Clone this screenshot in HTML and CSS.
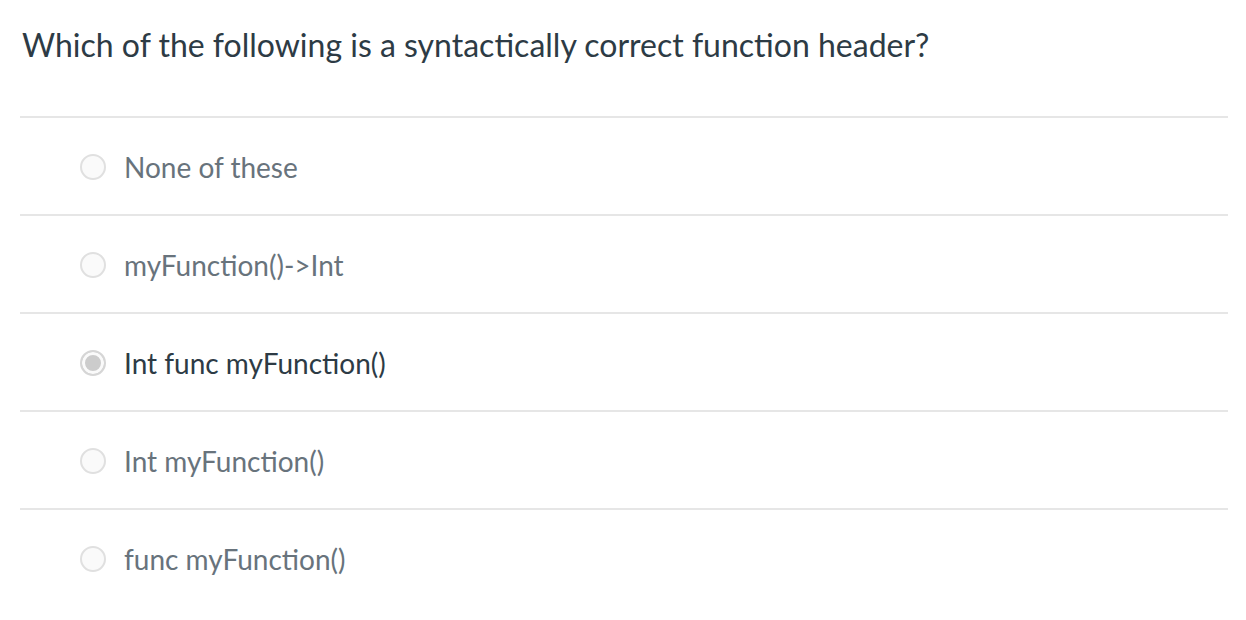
FILE: index.html
```html
<!DOCTYPE html>
<html>
<head>
<meta charset="utf-8">
<link rel="stylesheet" href="styles.css">
</head>
<body>
<div class="quiz">
  <div class="question">Which of the following is a syntactically correct function header?</div>
  <div class="answers">
    <div class="answer"><span class="radio"></span><span class="label">None of these</span></div>
    <div class="answer"><span class="radio"></span><span class="label">myFunction()-&gt;Int</span></div>
    <div class="answer selected"><span class="radio"></span><span class="label">Int func myFunction()</span></div>
    <div class="answer"><span class="radio"></span><span class="label">Int myFunction()</span></div>
    <div class="answer"><span class="radio"></span><span class="label">func myFunction()</span></div>
  </div>
</div>
</body>
</html>
```
FILE: styles.css
```css
html, body {
  margin: 0;
  padding: 0;
  background: #ffffff;
}
body {
  font-family: Lato, "Open Sans", sans-serif;
}
.quiz {
  width: 1208px;
  margin-left: 20px;
}
.question {
  height: 116px;
  box-sizing: border-box;
  padding: 22px 0 0 2px;
  font-size: 32px;
  line-height: 46px;
  color: #2d3b45;
}
.answer {
  display: flex;
  align-items: center;
  height: 98px;
  box-sizing: border-box;
  border-top: 2px solid #e6e6e6;
  padding-top: 2px;
  padding-left: 60px;
}
.radio {
  width: 26px;
  height: 26px;
  box-sizing: border-box;
  border-radius: 50%;
  border: 2px solid #e0e0e0;
  background: #fafafa;
  flex: none;
  margin-right: 18px;
}
.label {
  font-size: 28px;
  line-height: 34px;
  color: #68737c;
}
.selected .label {
  color: #2d3b45;
}
.selected .radio {
  border: 2px solid #d6d6d6;
  background: #cccccc;
  box-shadow: inset 0 0 0 3px #fafafa;
}
```
